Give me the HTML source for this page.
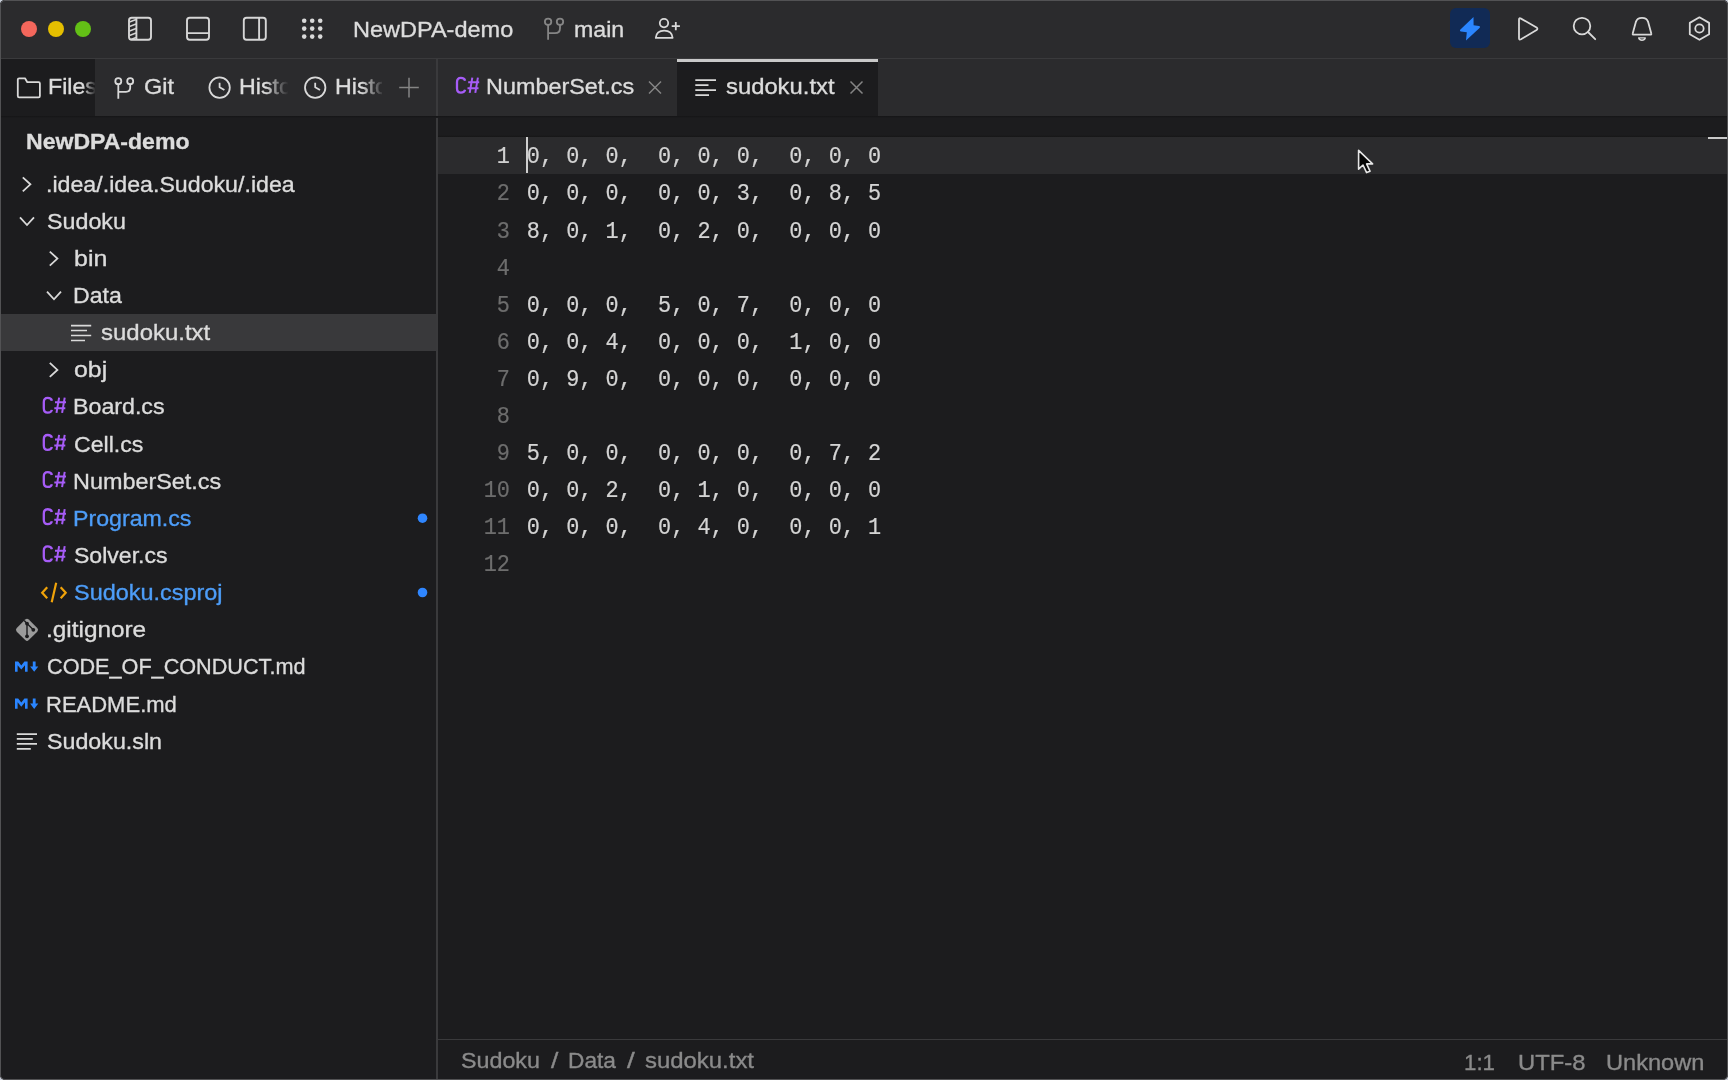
<!DOCTYPE html>
<html><head><meta charset="utf-8"><style>
html,body{margin:0;padding:0;width:1728px;height:1080px;overflow:hidden;background:#c9ced8;font-family:"Liberation Sans",sans-serif}
#win{position:absolute;left:0;top:0;width:1728px;height:1080px;border-radius:5px;overflow:hidden;background:#1c1c1e}
#bd{position:absolute;left:0;top:0;width:1726px;height:1078px;border:1px solid #525254;border-radius:5px;pointer-events:none}
.a{position:absolute}
.dot{width:16px;height:16px;border-radius:50%}
.t{position:absolute;white-space:pre;-webkit-text-stroke:0.35px currentColor;line-height:37px;height:37px;transform-origin:0 0}
.m{position:absolute;white-space:pre;-webkit-text-stroke:0.2px currentColor;font-family:"Liberation Mono",monospace;font-size:21.88px;line-height:37px;height:37px;transform-origin:0 26px;transform:scaleY(1.12)}
.fade1{-webkit-mask-image:linear-gradient(90deg,#000 0,#000 34px,transparent 47px)}
.fade2,.fade3{-webkit-mask-image:linear-gradient(90deg,#000 0,#000 26px,transparent 48px)}
</style></head>
<body><div id="win">
<div class="a" style="left:0;top:0;width:1728px;height:58px;background:#2b2b2d"></div>
<div class="a" style="left:0;top:58px;width:1728px;height:1px;background:#3a3a3c"></div>
<div class="a" style="left:0;top:59px;width:95px;height:57px;background:#1c1c1e"></div>
<div class="a" style="left:95px;top:59px;width:342px;height:57px;background:#2b2b2d"></div>
<div class="a" style="left:438px;top:59px;width:1290px;height:57px;background:#2b2b2d"></div>
<div class="a" style="left:677px;top:59px;width:201px;height:57px;background:#1c1c1e"></div>
<div class="a" style="left:677px;top:59px;width:201px;height:3px;background:#c9c9c9"></div>
<div class="a" style="left:436px;top:59px;width:2px;height:1021px;background:#3a3a3c"></div>
<div class="a" style="left:0;top:116px;width:1728px;height:2px;background:linear-gradient(#151516,#1c1c1e)"></div>
<div class="a" style="left:438px;top:135px;width:1290px;height:2px;background:linear-gradient(#1c1c1e,#161617)"></div>
<div class="a" style="left:0;top:314px;width:436px;height:37px;background:#39393b"></div>
<div class="a" style="left:438px;top:137px;width:1290px;height:37px;background:#2b2b2d"></div>
<div class="a" style="left:438px;top:1039px;width:1290px;height:1px;background:#3a3a3c"></div>
<div class="a" style="left:1708px;top:137px;width:20px;height:2px;background:#c9c9c9"></div>
<div class="a dot" style="left:21px;top:21px;background:#f4675c"></div>
<div class="a dot" style="left:48px;top:21px;background:#e5bf00"></div>
<div class="a dot" style="left:75px;top:21px;background:#63c016"></div>
<svg class="a" style="left:120px;top:10px" width="160" height="40" viewBox="120 10 160 40">
<rect x="129" y="17.8" width="22" height="22" rx="2.7" fill="none" stroke="#d6d6d6" stroke-width="1.9"/>
<line x1="136.4" y1="18" x2="136.4" y2="39.8" fill="none" stroke="#d6d6d6" stroke-width="1.9"/>
<g stroke="#d6d6d6" stroke-width="1.4"><line x1="129.5" y1="22" x2="136" y2="19.5"/><line x1="129.5" y1="26.5" x2="136" y2="24"/><line x1="129.5" y1="31" x2="136" y2="28.5"/><line x1="129.5" y1="35.5" x2="136" y2="33"/><line x1="131" y1="39.5" x2="136" y2="37.5"/></g>
<rect x="187" y="17.8" width="22" height="22" rx="2.7" fill="none" stroke="#d6d6d6" stroke-width="1.9"/>
<line x1="187" y1="33.1" x2="209" y2="33.1" fill="none" stroke="#d6d6d6" stroke-width="1.9"/>
<rect x="243.8" y="17.8" width="22" height="22" rx="2.7" fill="none" stroke="#d6d6d6" stroke-width="1.9"/>
<line x1="259.1" y1="18" x2="259.1" y2="39.8" fill="none" stroke="#d6d6d6" stroke-width="1.9"/>
</svg>
<svg class="a" style="left:290px;top:10px" width="40" height="40" viewBox="290 10 40 40"><circle cx="304.2" cy="20.7" r="2.3" fill="#d9d9d9"/><circle cx="304.2" cy="28.6" r="2.3" fill="#d9d9d9"/><circle cx="304.2" cy="36.6" r="2.3" fill="#d9d9d9"/><circle cx="312.2" cy="20.7" r="2.3" fill="#d9d9d9"/><circle cx="312.2" cy="28.6" r="2.3" fill="#d9d9d9"/><circle cx="312.2" cy="36.6" r="2.3" fill="#d9d9d9"/><circle cx="320.2" cy="20.7" r="2.3" fill="#d9d9d9"/><circle cx="320.2" cy="28.6" r="2.3" fill="#d9d9d9"/><circle cx="320.2" cy="36.6" r="2.3" fill="#d9d9d9"/></svg>
<div class="t" style="left:353.12px;top:10.80px;font-family:'Liberation Sans',sans-serif;font-size:22.5px;color:#dcdcdc;transform:scaleX(1.0448);">NewDPA-demo</div>
<svg class="a" style="left:536px;top:12px" width="40" height="32" viewBox="536 12 40 32" fill="none" stroke="#858585" stroke-width="1.8">
<circle cx="548.1" cy="21.8" r="3.2"/><circle cx="560" cy="21.8" r="3.2"/>
<path d="M548.1 25 V39.8 M560 25 V28.2 Q560 33.2 555 33.2 H548.1"/></svg>
<div class="t" style="left:574.01px;top:10.80px;font-family:'Liberation Sans',sans-serif;font-size:22.5px;color:#dcdcdc;transform:scaleX(1.0305);">main</div>
<svg class="a" style="left:648px;top:12px" width="40" height="32" viewBox="648 12 40 32" fill="none" stroke="#d9d9d9" stroke-width="1.8">
<circle cx="664" cy="23.1" r="4.2"/>
<path d="M655.8 37.9 Q656.5 30.7 664.2 30.7 Q671.9 30.7 672.6 37.9 Z" stroke-linejoin="round"/>
<path d="M675.8 22.1 V30.3 M671.7 26.2 H679.9"/></svg>
<div class="a" style="left:1450px;top:8px;width:40px;height:40px;border-radius:6px;background:#112a55"></div>
<svg class="a" style="left:1450px;top:8px" width="40" height="40" viewBox="1450 8 40 40">
<path d="M1473.5 17 L1460.2 29.8 Q1459.3 31.3 1461 31.6 L1466.8 32.3 L1466 40.6 L1479.8 27.8 Q1480.6 26.4 1479 26.1 L1473.6 25.3 Z" fill="#2a85ff"/></svg>
<svg class="a" style="left:1510px;top:8px" width="200" height="40" viewBox="1510 8 200 40" fill="none" stroke="#d9d9d9" stroke-width="1.8" stroke-linejoin="round">
<path d="M1519 19.5 Q1519 17.5 1521 18.6 L1536.6 27.5 Q1538.2 28.8 1536.6 30 L1521 39.2 Q1519 40.2 1519 38.2 Z"/>
<circle cx="1582" cy="26.1" r="8.3"/><path d="M1588 32 L1595.2 39.2" stroke-linecap="round"/>
<path d="M1632.7 33.6 L1636 21.6 Q1637.3 17.9 1642 17.9 Q1646.7 17.9 1648 21.6 L1651.3 33.6 Q1651.6 34.6 1650.4 34.6 L1633.6 34.6 Q1632.4 34.6 1632.7 33.6 Z"/>
<path d="M1638.7 37.9 H1645.3 Q1644.5 40.2 1642 40.2 Q1639.5 40.2 1638.7 37.9 Z" stroke-width="1.4"/>
<path d="M1699.45 17.3 L1709.1 22.9 L1709.1 34.2 L1699.45 39.8 L1689.8 34.2 L1689.8 22.9 Z"/>
<circle cx="1699.45" cy="28.5" r="4.2"/>
</svg>
<svg class="a" style="left:10px;top:70px" width="420" height="36" viewBox="10 70 420 36" fill="none" stroke="#d9d9d9" stroke-width="1.8" stroke-linejoin="round">
<path d="M17.8 79.6 Q17.8 78.3 19.1 78.3 H25 L27.3 82.2 H38.6 Q39.9 82.2 39.9 83.5 V96 Q39.9 97.3 38.6 97.3 H19.1 Q17.8 97.3 17.8 96 Z"/>
<circle cx="118.3" cy="81.2" r="3"/><circle cx="130.2" cy="81.2" r="3"/>
<path d="M118.3 84.2 V98.8 M130.2 84.2 V87.5 Q130.2 91.8 126 91.8 H118.3"/>
<circle cx="219.6" cy="87.6" r="10.2"/><path d="M219.6 82.8 V87.2 L224.4 90"/>
<circle cx="315.2" cy="87.6" r="10.2"/><path d="M315.2 82.8 V87.2 L320 90"/>
<path d="M409 77.8 V97.4 M399.2 87.6 H418.8" stroke="#858585" stroke-width="1.5"/>
</svg>
<div class="a" style="left:40px;top:59px;width:55px;height:57px;overflow:hidden"><div class="t fade1" style="left:7.95px;top:9.40px;font-family:'Liberation Sans',sans-serif;font-size:22.5px;color:#dcdcdc;transform:scaleX(1.0300);">Files</div></div>
<div class="t" style="left:144.43px;top:68.40px;font-family:'Liberation Sans',sans-serif;font-size:22.5px;color:#dcdcdc;transform:scaleX(1.0419);">Git</div>
<div class="a" style="left:236px;top:59px;width:56px;height:57px;overflow:hidden"><div class="t fade2" style="left:3.25px;top:9.40px;font-family:'Liberation Sans',sans-serif;font-size:22.5px;color:#dcdcdc;transform:scaleX(1.0300);">History</div></div>
<div class="a" style="left:332px;top:59px;width:50px;height:57px;overflow:hidden"><div class="t fade3" style="left:2.75px;top:9.40px;font-family:'Liberation Sans',sans-serif;font-size:22.5px;color:#dcdcdc;transform:scaleX(1.0300);">History</div></div>
<svg class="a" style="left:0;top:0" width="500" height="116" viewBox="0 0 500 116"><path d="M465.09999999999997 80.65 Q464.5 77.85 460.9 77.85 Q457.0 77.85 457.0 82.25 V88.25 Q457.0 92.65 460.9 92.65 Q464.5 92.65 465.09999999999997 89.85" fill="none" stroke="#a65cf7" stroke-width="2.3"/><path d="M469.7 92.85 L472.29999999999995 77.65 M475.29999999999995 92.85 L477.9 77.65 M468.2 82.25 H479.2 M467.5 88.25 H478.5" fill="none" stroke="#a65cf7" stroke-width="2"/></svg>
<div class="t" style="left:485.83px;top:68.40px;font-family:'Liberation Sans',sans-serif;font-size:22.5px;color:#dcdcdc;transform:scaleX(1.0394);">NumberSet.cs</div>
<svg class="a" style="left:640px;top:70px" width="230" height="36" viewBox="640 70 230 36" fill="none" stroke="#858585" stroke-width="1.5">
<path d="M649 81.5 L661 93.5 M661 81.5 L649 93.5 M850.5 81.5 L862.5 93.5 M862.5 81.5 L850.5 93.5"/>
<path d="M695.3 80.2 H716 M695.3 85.1 H708.5 M695.3 90.1 H716 M695.3 95.1 H709" stroke="#d9d9d9" stroke-width="1.7"/>
</svg>
<div class="t" style="left:726.09px;top:68.40px;font-family:'Liberation Sans',sans-serif;font-size:22.5px;color:#dcdcdc;transform:scaleX(1.0580);">sudoku.txt</div>
<div class="t" style="left:26.02px;top:123.30px;font-family:'Liberation Sans',sans-serif;font-size:22.5px;font-weight:700;color:#dcdcdc;transform:scaleX(1.0243);">NewDPA-demo</div>
<div class="t" style="left:45.71px;top:165.70px;font-family:'Liberation Sans',sans-serif;font-size:22.5px;color:#dcdcdc;transform:scaleX(1.0301);">.idea/.idea.Sudoku/.idea</div>
<div class="t" style="left:46.94px;top:202.83px;font-family:'Liberation Sans',sans-serif;font-size:22.5px;color:#dcdcdc;transform:scaleX(1.0339);">Sudoku</div>
<div class="t" style="left:73.50px;top:239.96px;font-family:'Liberation Sans',sans-serif;font-size:22.5px;color:#dcdcdc;transform:scaleX(1.1093);">bin</div>
<div class="t" style="left:73.15px;top:277.09px;font-family:'Liberation Sans',sans-serif;font-size:22.5px;color:#dcdcdc;transform:scaleX(1.0283);">Data</div>
<div class="t" style="left:101.18px;top:314.22px;font-family:'Liberation Sans',sans-serif;font-size:22.5px;color:#dcdcdc;transform:scaleX(1.0649);">sudoku.txt</div>
<div class="t" style="left:74.00px;top:351.35px;font-family:'Liberation Sans',sans-serif;font-size:22.5px;color:#dcdcdc;transform:scaleX(1.1057);">obj</div>
<div class="t" style="left:73.34px;top:388.48px;font-family:'Liberation Sans',sans-serif;font-size:22.5px;color:#dcdcdc;transform:scaleX(1.0312);">Board.cs</div>
<div class="t" style="left:74.04px;top:425.61px;font-family:'Liberation Sans',sans-serif;font-size:22.5px;color:#dcdcdc;transform:scaleX(1.0274);">Cell.cs</div>
<div class="t" style="left:73.33px;top:462.74px;font-family:'Liberation Sans',sans-serif;font-size:22.5px;color:#dcdcdc;transform:scaleX(1.0401);">NumberSet.cs</div>
<div class="t" style="left:73.35px;top:499.87px;font-family:'Liberation Sans',sans-serif;font-size:22.5px;color:#4d9df8;transform:scaleX(1.0293);">Program.cs</div>
<div class="t" style="left:74.05px;top:537.00px;font-family:'Liberation Sans',sans-serif;font-size:22.5px;color:#dcdcdc;transform:scaleX(1.0240);">Solver.cs</div>
<div class="t" style="left:74.03px;top:574.13px;font-family:'Liberation Sans',sans-serif;font-size:22.5px;color:#4d9df8;transform:scaleX(1.0418);">Sudoku.csproj</div>
<div class="t" style="left:45.51px;top:611.26px;font-family:'Liberation Sans',sans-serif;font-size:22.5px;color:#dcdcdc;transform:scaleX(1.0821);">.gitignore</div>
<div class="t" style="left:46.62px;top:648.39px;font-family:'Liberation Sans',sans-serif;font-size:22.5px;color:#dcdcdc;transform:scaleX(0.9618);">CODE_OF_CONDUCT.md</div>
<div class="t" style="left:45.94px;top:685.52px;font-family:'Liberation Sans',sans-serif;font-size:22.5px;color:#dcdcdc;transform:scaleX(0.9778);">README.md</div>
<div class="t" style="left:46.54px;top:722.65px;font-family:'Liberation Sans',sans-serif;font-size:22.5px;color:#dcdcdc;transform:scaleX(1.0334);">Sudoku.sln</div>
<svg class="a" style="left:0;top:0" width="436" height="1080" viewBox="0 0 436 1080"><path d="M22.8 177.3 L30.4 184.3 L22.8 191.3" fill="none" stroke="#d9d9d9" stroke-width="1.8"/><path d="M20 217.43 L27 225.03 L34 217.43" fill="none" stroke="#d9d9d9" stroke-width="1.8"/><path d="M49.8 251.56 L57.4 258.56 L49.8 265.56" fill="none" stroke="#d9d9d9" stroke-width="1.8"/><path d="M47 291.69000000000005 L54 299.2900000000001 L61 291.69000000000005" fill="none" stroke="#d9d9d9" stroke-width="1.8"/><path d="M71 325.62000000000006 H91.2 M71 330.52000000000004 H87 M71 335.52000000000004 H91.2 M71 340.52000000000004 H85" fill="none" stroke="#d9d9d9" stroke-width="1.7"/><path d="M49.8 362.95000000000005 L57.4 369.95000000000005 L49.8 376.95000000000005" fill="none" stroke="#d9d9d9" stroke-width="1.8"/><path d="M51.900000000000006 400.68 Q51.300000000000004 397.88000000000005 47.7 397.88000000000005 Q43.800000000000004 397.88000000000005 43.800000000000004 402.28000000000003 V408.28000000000003 Q43.800000000000004 412.68 47.7 412.68 Q51.300000000000004 412.68 51.900000000000006 409.88000000000005" fill="none" stroke="#a65cf7" stroke-width="2.3"/><path d="M56.5 412.88000000000005 L59.1 397.68 M62.1 412.88000000000005 L64.7 397.68 M55.0 402.28000000000003 H66.0 M54.300000000000004 408.28000000000003 H65.30000000000001" fill="none" stroke="#a65cf7" stroke-width="2"/><path d="M51.900000000000006 437.81 Q51.300000000000004 435.01000000000005 47.7 435.01000000000005 Q43.800000000000004 435.01000000000005 43.800000000000004 439.41 V445.41 Q43.800000000000004 449.81 47.7 449.81 Q51.300000000000004 449.81 51.900000000000006 447.01000000000005" fill="none" stroke="#a65cf7" stroke-width="2.3"/><path d="M56.5 450.01000000000005 L59.1 434.81 M62.1 450.01000000000005 L64.7 434.81 M55.0 439.41 H66.0 M54.300000000000004 445.41 H65.30000000000001" fill="none" stroke="#a65cf7" stroke-width="2"/><path d="M51.900000000000006 474.94 Q51.300000000000004 472.14000000000004 47.7 472.14000000000004 Q43.800000000000004 472.14000000000004 43.800000000000004 476.54 V482.54 Q43.800000000000004 486.94 47.7 486.94 Q51.300000000000004 486.94 51.900000000000006 484.14000000000004" fill="none" stroke="#a65cf7" stroke-width="2.3"/><path d="M56.5 487.14000000000004 L59.1 471.94 M62.1 487.14000000000004 L64.7 471.94 M55.0 476.54 H66.0 M54.300000000000004 482.54 H65.30000000000001" fill="none" stroke="#a65cf7" stroke-width="2"/><path d="M51.900000000000006 512.07 Q51.300000000000004 509.2700000000001 47.7 509.2700000000001 Q43.800000000000004 509.2700000000001 43.800000000000004 513.6700000000001 V519.6700000000001 Q43.800000000000004 524.07 47.7 524.07 Q51.300000000000004 524.07 51.900000000000006 521.2700000000001" fill="none" stroke="#a65cf7" stroke-width="2.3"/><path d="M56.5 524.2700000000001 L59.1 509.07000000000005 M62.1 524.2700000000001 L64.7 509.07000000000005 M55.0 513.6700000000001 H66.0 M54.300000000000004 519.6700000000001 H65.30000000000001" fill="none" stroke="#a65cf7" stroke-width="2"/><path d="M51.900000000000006 549.2 Q51.300000000000004 546.4000000000001 47.7 546.4000000000001 Q43.800000000000004 546.4000000000001 43.800000000000004 550.8000000000001 V556.8000000000001 Q43.800000000000004 561.2 47.7 561.2 Q51.300000000000004 561.2 51.900000000000006 558.4000000000001" fill="none" stroke="#a65cf7" stroke-width="2.3"/><path d="M56.5 561.4000000000001 L59.1 546.2 M62.1 561.4000000000001 L64.7 546.2 M55.0 550.8000000000001 H66.0 M54.300000000000004 556.8000000000001 H65.30000000000001" fill="none" stroke="#a65cf7" stroke-width="2"/><path d="M47.2 587.23 L42.2 592.73 L47.2 598.23 M60.7 587.23 L65.7 592.73 L60.7 598.23 M56.2 582.73 L51.7 602.23" fill="none" stroke="#f0a30a" stroke-width="2.2"/><g transform="translate(27 629.8600000000001)"><rect x="-8.5" y="-8.5" width="17" height="17" rx="2.5" transform="rotate(45)" fill="#9b9b9b"/><path d="M-2.8 -9.4 L0 -6.3 V6.5 M0 -6.3 L6.3 0" stroke="#1c1c1e" stroke-width="1.4" fill="none"/><circle cx="0" cy="-6.3" r="1.9" fill="#1c1c1e"/><circle cx="6.3" cy="0" r="1.9" fill="#1c1c1e"/><circle cx="0" cy="6.5" r="1.9" fill="#1c1c1e"/></g><path d="M15 671.69 V661.39 H18.2 L21.3 665.39 L24.4 661.39 H27.6 V671.69 H25 V665.19 L21.3 669.59 L17.6 665.19 V671.69 Z" fill="#2a85ff"/><path d="M32.8 661.39 H35.6 V666.39 H38.3 L34.2 671.79 L30.1 666.39 H32.8 Z" fill="#2a85ff"/><path d="M15 708.8200000000002 V698.5200000000001 H18.2 L21.3 702.5200000000001 L24.4 698.5200000000001 H27.6 V708.8200000000002 H25 V702.3200000000002 L21.3 706.7200000000001 L17.6 702.3200000000002 V708.8200000000002 Z" fill="#2a85ff"/><path d="M32.8 698.5200000000001 H35.6 V703.5200000000001 H38.3 L34.2 708.9200000000001 L30.1 703.5200000000001 H32.8 Z" fill="#2a85ff"/><path d="M16.8 734.05 H37.0 M16.8 738.95 H32.8 M16.8 743.95 H37.0 M16.8 748.95 H30.8" fill="none" stroke="#d9d9d9" stroke-width="1.7"/><circle cx="422.5" cy="518.2" r="4.8" fill="#2f86ff"/><circle cx="422.5" cy="592.5" r="4.8" fill="#2f86ff"/></svg>
<div class="m" style="left:496.87px;top:139.38px;color:#d0d0d0">1</div>
<div class="m" style="left:526.79px;top:139.38px;color:#d4d4d4">0, 0, 0,  0, 0, 0,  0, 0, 0</div>
<div class="m" style="left:496.87px;top:176.47px;color:#6d6d6d">2</div>
<div class="m" style="left:526.79px;top:176.47px;color:#d4d4d4">0, 0, 0,  0, 0, 3,  0, 8, 5</div>
<div class="m" style="left:496.87px;top:213.56px;color:#6d6d6d">3</div>
<div class="m" style="left:526.79px;top:213.56px;color:#d4d4d4">8, 0, 1,  0, 2, 0,  0, 0, 0</div>
<div class="m" style="left:496.87px;top:250.65px;color:#6d6d6d">4</div>
<div class="m" style="left:496.87px;top:287.74px;color:#6d6d6d">5</div>
<div class="m" style="left:526.79px;top:287.74px;color:#d4d4d4">0, 0, 0,  5, 0, 7,  0, 0, 0</div>
<div class="m" style="left:496.87px;top:324.83px;color:#6d6d6d">6</div>
<div class="m" style="left:526.79px;top:324.83px;color:#d4d4d4">0, 0, 4,  0, 0, 0,  1, 0, 0</div>
<div class="m" style="left:496.87px;top:361.92px;color:#6d6d6d">7</div>
<div class="m" style="left:526.79px;top:361.92px;color:#d4d4d4">0, 9, 0,  0, 0, 0,  0, 0, 0</div>
<div class="m" style="left:496.87px;top:399.01px;color:#6d6d6d">8</div>
<div class="m" style="left:496.87px;top:436.10px;color:#6d6d6d">9</div>
<div class="m" style="left:526.79px;top:436.10px;color:#d4d4d4">5, 0, 0,  0, 0, 0,  0, 7, 2</div>
<div class="m" style="left:483.74px;top:473.19px;color:#6d6d6d">10</div>
<div class="m" style="left:526.79px;top:473.19px;color:#d4d4d4">0, 0, 2,  0, 1, 0,  0, 0, 0</div>
<div class="m" style="left:483.74px;top:510.28px;color:#6d6d6d">11</div>
<div class="m" style="left:526.79px;top:510.28px;color:#d4d4d4">0, 0, 0,  0, 4, 0,  0, 0, 1</div>
<div class="m" style="left:483.74px;top:547.37px;color:#6d6d6d">12</div>
<div class="a" style="left:526px;top:137px;width:2px;height:36px;background:#cfcfcf"></div>
<svg class="a" style="left:1352px;top:146px" width="26" height="32" viewBox="1352 146 26 32">
<path d="M1358.6 150.4 L1358.6 169.2 L1363 165 L1366.6 172.6 L1370 171.2 L1366.6 163.9 L1372.6 163.9 Z" fill="#050505" stroke="#e6e6e6" stroke-width="1.6" stroke-linejoin="round"/></svg>
<div class="t" style="left:461.44px;top:1041.80px;font-family:'Liberation Sans',sans-serif;font-size:22.5px;color:#8b8b8b;transform:scaleX(1.0339);">Sudoku</div>
<div class="t" style="left:550.60px;top:1041.80px;font-family:'Liberation Sans',sans-serif;font-size:22.5px;color:#8b8b8b;transform:scaleX(1.1746);">/</div>
<div class="t" style="left:567.58px;top:1041.80px;font-family:'Liberation Sans',sans-serif;font-size:22.5px;color:#8b8b8b;transform:scaleX(1.0087);">Data</div>
<div class="t" style="left:627.40px;top:1041.80px;font-family:'Liberation Sans',sans-serif;font-size:22.5px;color:#8b8b8b;transform:scaleX(1.2381);">/</div>
<div class="t" style="left:645.18px;top:1041.80px;font-family:'Liberation Sans',sans-serif;font-size:22.5px;color:#8b8b8b;transform:scaleX(1.0629);">sudoku.txt</div>
<div class="t" style="left:1463.74px;top:1044.00px;font-family:'Liberation Sans',sans-serif;font-size:22.5px;color:#8b8b8b;transform:scaleX(0.9904);">1:1</div>
<div class="t" style="left:1517.53px;top:1044.00px;font-family:'Liberation Sans',sans-serif;font-size:22.5px;color:#8b8b8b;transform:scaleX(1.0582);">UTF-8</div>
<div class="t" style="left:1606.05px;top:1044.00px;font-family:'Liberation Sans',sans-serif;font-size:22.5px;color:#8b8b8b;transform:scaleX(1.0488);">Unknown</div>
</div><div id="bd"></div></body></html>
